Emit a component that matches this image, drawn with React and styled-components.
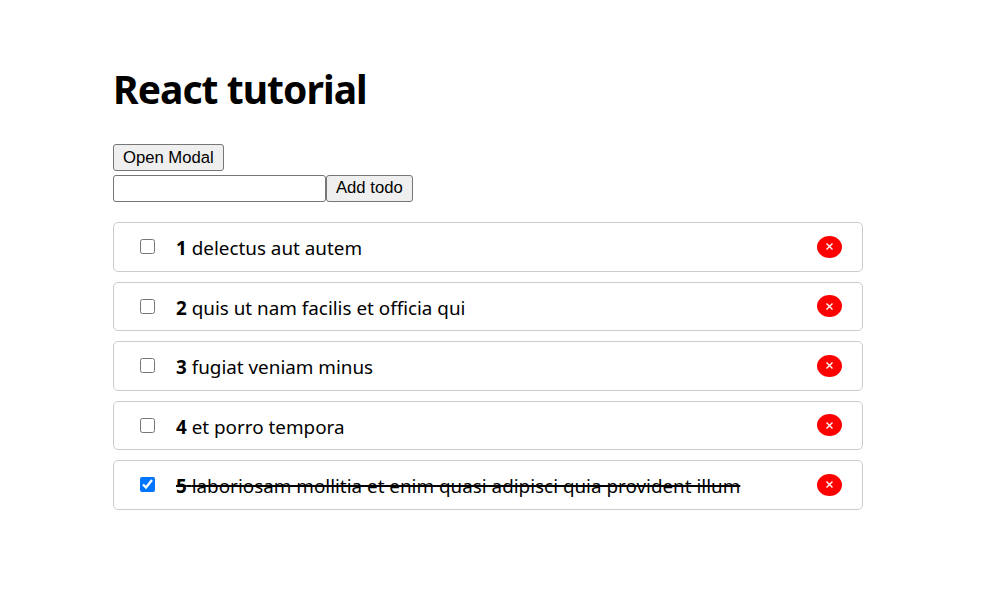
import React from "react";
import styled, { createGlobalStyle } from "styled-components";

const Global = createGlobalStyle`
  html, body { margin: 0; padding: 0; background: #fff; }
  body { font-family: "Noto Sans", sans-serif; color: #000; }
`;
const Page = styled.div`
  width: 750px;
  margin-left: 113px;
  padding-top: 63px;
`;
const Title = styled.h1`
  font-family: "Noto Sans", sans-serif;
  font-size: 39px;
  line-height: 52px;
  font-weight: 700;
  letter-spacing: -0.95px;
  margin: 0 0 29px;
`;
const Btn = styled.button`
  font-family: "Liberation Sans", Arial, sans-serif;
  font-size: 16.67px;
  height: 27px;
  padding: 0 9px ${(p) => (p.$lift ? "2px" : "0")};
  background: #efefef;
  border: 1px solid #767676;
  border-radius: 3px;
  color: #000;
  box-sizing: border-box;
  display: block;
`;
const Form = styled.form`
  display: flex;
  margin-top: 4px;
`;
const Input = styled.input`
  width: 213px;
  height: 27px;
  box-sizing: border-box;
  border: 1px solid #767676;
  border-radius: 3px;
  padding: 1px 2px;
`;
const List = styled.div`
  display: flex;
  flex-direction: column;
  gap: 10px;
  margin-top: 20px;
`;
const Row = styled.div`
  height: 49.5px;
  box-sizing: border-box;
  border: 1px solid #ccc;
  border-radius: 5px;
  display: flex;
  align-items: center;
  padding: 0 20px 0 26px;
`;
const Check = styled.input`
  width: 15px;
  height: 15px;
  margin: 0 21px 0 0;
`;
const Label = styled.span`
  flex: 1;
  padding-top: 3px;
  font-family: "Noto Sans", sans-serif;
  font-size: 18.85px;
  text-decoration: ${(p) => (p.$done ? "line-through" : "none")};
  text-decoration-thickness: 2px;
`;
const Del = styled.button`
  width: 25px;
  height: 22px;
  border: 0;
  padding: 0;
  border-radius: 50%;
  background: #f00;
  display: flex;
  align-items: center;
  justify-content: center;
`;
const todos = [
  [1, "delectus aut autem"],
  [2, "quis ut nam facilis et officia qui"],
  [3, "fugiat veniam minus"],
  [4, "et porro tempora"],
  [5, "laboriosam mollitia et enim quasi adipisci quia provident illum", true],
];
export default function App() {
  return (
    <Page>
      <Global />
      <Title>React tutorial</Title>
      <Btn type="button">Open Modal</Btn>
      <Form onSubmit={(e) => e.preventDefault()}>
        <Input />
        <Btn type="submit" $lift>Add todo</Btn>
      </Form>
      <List>
        {todos.map(([id, text, done]) => (
          <Row key={id}>
            <Check type="checkbox" defaultChecked={!!done} />
            <Label $done={done}>
              <b>{id}</b> {text}
            </Label>
            <Del aria-label="delete">
              <svg width="9" height="9" viewBox="0 0 9 9">
                <path d="M1.5 1.5L7.5 7.5M7.5 1.5L1.5 7.5" stroke="#fff" strokeWidth="1.4" />
              </svg>
            </Del>
          </Row>
        ))}
      </List>
    </Page>
  );
}
